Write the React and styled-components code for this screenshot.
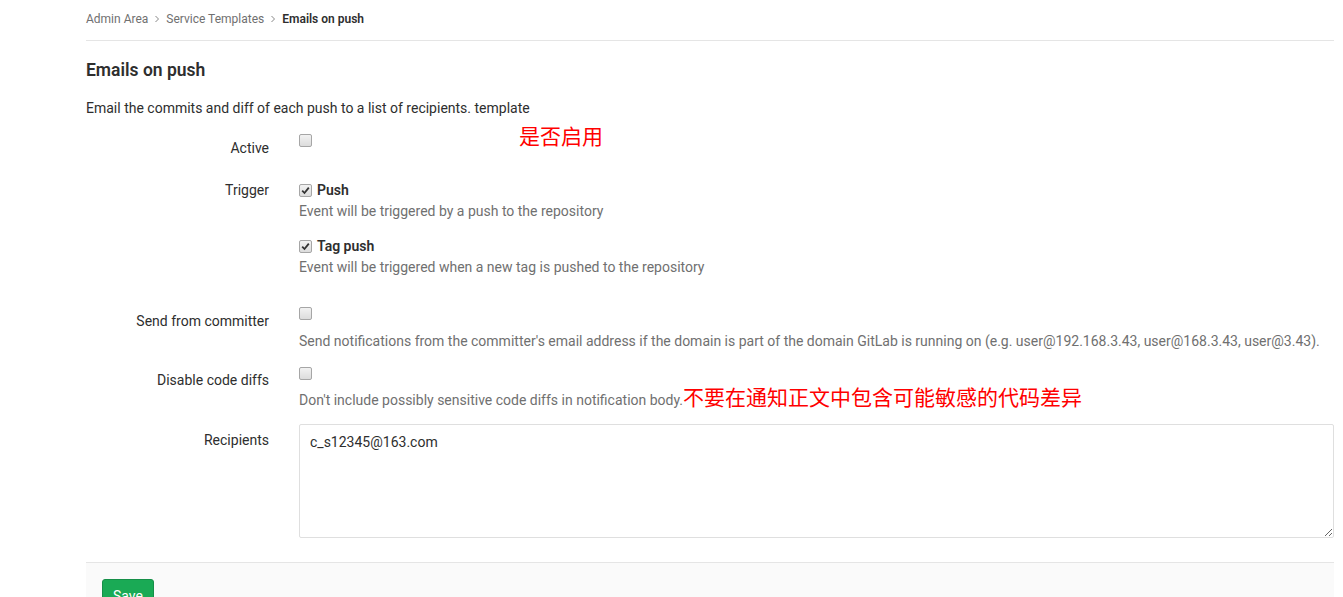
import React from 'react';
import styled, { createGlobalStyle } from 'styled-components';

const GlobalStyle = createGlobalStyle`
  html, body {
    margin: 0;
    padding: 0;
    background: #fff;
  }
  body {
    font-family: Roboto, "Liberation Sans", "Noto Sans CJK SC", sans-serif;
    font-size: 14px;
    line-height: 20px;
    color: #2e2e2e;
  }
`;

const Page = styled.div`
  padding: 0 9px 0 86px;
`;

const Breadcrumbs = styled.div`
  display: flex;
  align-items: center;
  height: 41px;
  border-bottom: 1px solid #e5e5e5;
  font-size: 12px;
  color: #707070;
  box-sizing: border-box;
  padding-bottom: 3px;
`;

const Crumb = styled.span`
  color: ${(p) => (p.current ? '#2e2e2e' : '#707070')};
  font-weight: ${(p) => (p.current ? 600 : 400)};
`;

const Chevron = styled.svg`
  width: 8px;
  height: 8px;
  margin: 0 5px 0 5px;
`;

const Title = styled.h3`
  margin: 17px 0 0;
  font-size: 17.5px;
  line-height: 24px;
  font-weight: 600;
`;

const Intro = styled.p`
  margin: 16px 0 0;
`;

const Form = styled.div`
  margin-top: 9px;
`;

const Row = styled.div`
  display: grid;
  grid-template-columns: 183px 1fr;
  column-gap: 30px;
  margin-bottom: ${(p) => p.gap ?? 22}px;
`;

const Label = styled.div`
  text-align: right;
  padding-top: ${(p) => p.top ?? 11}px;
`;

const Controls = styled.div`
  display: flex;
  flex-direction: column;
  position: relative;
`;

const CheckLine = styled.div`
  display: flex;
  align-items: center;
  gap: 5px;
  height: 20px;
  margin-top: ${(p) => p.top ?? 0}px;
  font-weight: 600;
`;

const Box = styled.span`
  width: 13px;
  height: 13px;
  box-sizing: border-box;
  border: 1px solid #a6a6a6;
  border-radius: 2px;
  background: linear-gradient(#f2f2f2, #dcdcdc);
  display: flex;
  align-items: center;
  justify-content: center;
`;

const Help = styled.div`
  color: #707070;
  margin-top: ${(p) => p.top ?? 0}px;
`;

const Note = styled.span`
  color: #ff0000;
  font-family: "Noto Sans CJK SC", sans-serif;
  font-size: 21px;
  line-height: 20px;
  vertical-align: top;
  position: relative;
  top: -4px;
`;

const FloatNote = styled(Note)`
  position: absolute;
  left: 220px;
  top: -4px;
  line-height: 24px;
`;

const Recipients = styled.textarea`
  box-sizing: border-box;
  width: 100%;
  height: 114px;
  border: 1px solid #dfdfdf;
  border-radius: 2px;
  padding: 7px 10px 5px;
  font: inherit;
  color: #2e2e2e;
  resize: vertical;
  outline: none;
`;

const Footer = styled.div`
  margin-top: 24px;
  border-top: 1px solid #e5e5e5;
  background: #fafafa;
  padding: 16px 16px 20px;
`;

const SaveButton = styled.button`
  background: #1aaa55;
  border: 1px solid #168f48;
  border-radius: 3px;
  color: #fff;
  font: inherit;
  padding: 6px 10px;
  cursor: pointer;
`;

function Checkbox({ checked }) {
  return (
    <Box>
      {checked && (
        <svg width="9" height="9" viewBox="0 0 9 9">
          <path d="M1.2 4.6 L3.5 7 L7.8 1.6" fill="none" stroke="#333" strokeWidth="1.8" />
        </svg>
      )}
    </Box>
  );
}

function Sep() {
  return (
    <Chevron viewBox="0 0 8 8">
      <path d="M2.5 1 L5.5 4 L2.5 7" fill="none" stroke="#888" strokeWidth="1" />
    </Chevron>
  );
}

export default function App() {
  return (
    <Page>
      <GlobalStyle />
      <Breadcrumbs>
        <Crumb>Admin Area</Crumb>
        <Sep />
        <Crumb>Service Templates</Crumb>
        <Sep />
        <Crumb current>Emails on push</Crumb>
      </Breadcrumbs>
      <Title>Emails on push</Title>
      <Intro>Email the commits and diff of each push to a list of recipients. template</Intro>
      <Form>
        <Row gap={22}>
          <Label top={11}>Active</Label>
          <Controls>
            <CheckLine top={3}><Checkbox /></CheckLine>
            <FloatNote>是否启用</FloatNote>
          </Controls>
        </Row>
        <Row gap={26}>
          <Label top={0}>Trigger</Label>
          <Controls>
            <CheckLine><Checkbox checked />Push</CheckLine>
            <Help top={1}>Event will be triggered by a push to the repository</Help>
            <CheckLine top={15}><Checkbox checked />Tag push</CheckLine>
            <Help top={1}>Event will be triggered when a new tag is pushed to the repository</Help>
          </Controls>
        </Row>
        <Row gap={12}>
          <Label top={8}>Send from committer</Label>
          <Controls>
            <CheckLine><Checkbox /></CheckLine>
            <Help top={8}>Send notifications from the committer's email address if the domain is part of the domain GitLab is running on (e.g. user@192.168.3.43, user@168.3.43, user@3.43).</Help>
          </Controls>
        </Row>
        <Row gap={14}>
          <Label top={7}>Disable code diffs</Label>
          <Controls>
            <CheckLine><Checkbox /></CheckLine>
            <Help top={7}>
              Don't include possibly sensitive code diffs in notification body.
              <Note>不要在通知正文中包含可能敏感的代码差异</Note>
            </Help>
          </Controls>
        </Row>
        <Row gap={0}>
          <Label top={6}>Recipients</Label>
          <Controls>
            <Recipients defaultValue="c_s12345@163.com" />
          </Controls>
        </Row>
      </Form>
      <Footer>
        <SaveButton>Save</SaveButton>
      </Footer>
    </Page>
  );
}
